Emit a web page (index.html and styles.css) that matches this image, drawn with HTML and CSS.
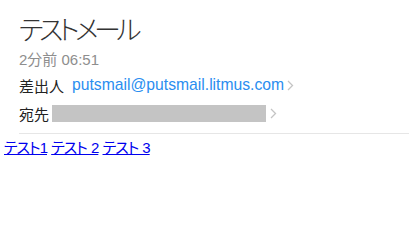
FILE: index.html
```html
<!DOCTYPE html>
<html lang="ja">
<head>
    <meta charset="UTF-8">
    <title>テストメール</title>
    <link rel="stylesheet" href="styles.css">
</head>
<body>
    <div class="header">
        <h1 class="subject">テストメール</h1>
        <div class="date">2分前 06:51</div>
        <div class="row">
            <span class="label">差出人</span>
            <span class="from">putsmail@putsmail.litmus.com</span>
            <svg class="chev" width="7" height="11" viewBox="0 0 7 11"><path d="M1 1l4.5 4.5L1 10" fill="none" stroke="#c4c4c4" stroke-width="1.3"/></svg>
        </div>
        <div class="row">
            <span class="label">宛先</span>
            <span class="hidden-to"></span>
            <svg class="chev" width="7" height="11" viewBox="0 0 7 11"><path d="M1 1l4.5 4.5L1 10" fill="none" stroke="#c4c4c4" stroke-width="1.3"/></svg>
        </div>
    </div>
    <div class="content">
        <a href="#">テスト1</a> <a href="#">テスト 2</a> <a href="#">テスト 3</a>
    </div>
</body>
</html>
```
FILE: styles.css
```css
body {
    margin: 0;
    font-family: "Noto Sans CJK JP", "Liberation Sans", sans-serif;
    background: #fff;
    color: #222;
}
.header {
    margin-left: 19px;
    padding-top: 11px;
    border-bottom: 1px solid #e6e6e6;
    height: 134px;
    box-sizing: border-box;
}
.subject {
    margin: 0;
    font-size: 27px;
    font-weight: 300;
    line-height: 36px;
    color: #333;
    font-feature-settings: "palt";
    letter-spacing: -4.5px;
}
.date {
    font-family: "Liberation Sans", "Noto Sans CJK JP", sans-serif;
    font-size: 15px;
    line-height: 22px;
    color: #8e8e8e;
    margin-top: 2px;
}
.row {
    display: flex;
    align-items: center;
    height: 28px;
    font-size: 15px;
}
.label {
    margin-right: 8px;
}
.from {
    font-family: "Liberation Sans", sans-serif;
    font-size: 15.7px;
    color: #2a8ef0;
    margin-right: 3px;
}
.hidden-to {
    display: inline-block;
    width: 214px;
    height: 17px;
    background: #c4c4c4;
    margin-left: -5px;
    margin-right: 4px;
}
.chev {
    display: block;
}
.content {
    padding: 2px 4px;
    font-family: "Liberation Sans", "Noto Sans CJK JP", sans-serif;
    font-size: 15px;
    font-feature-settings: "palt";
    letter-spacing: -1px;
    word-spacing: 1px;
}
.content a {
    color: #00e;
}
```
